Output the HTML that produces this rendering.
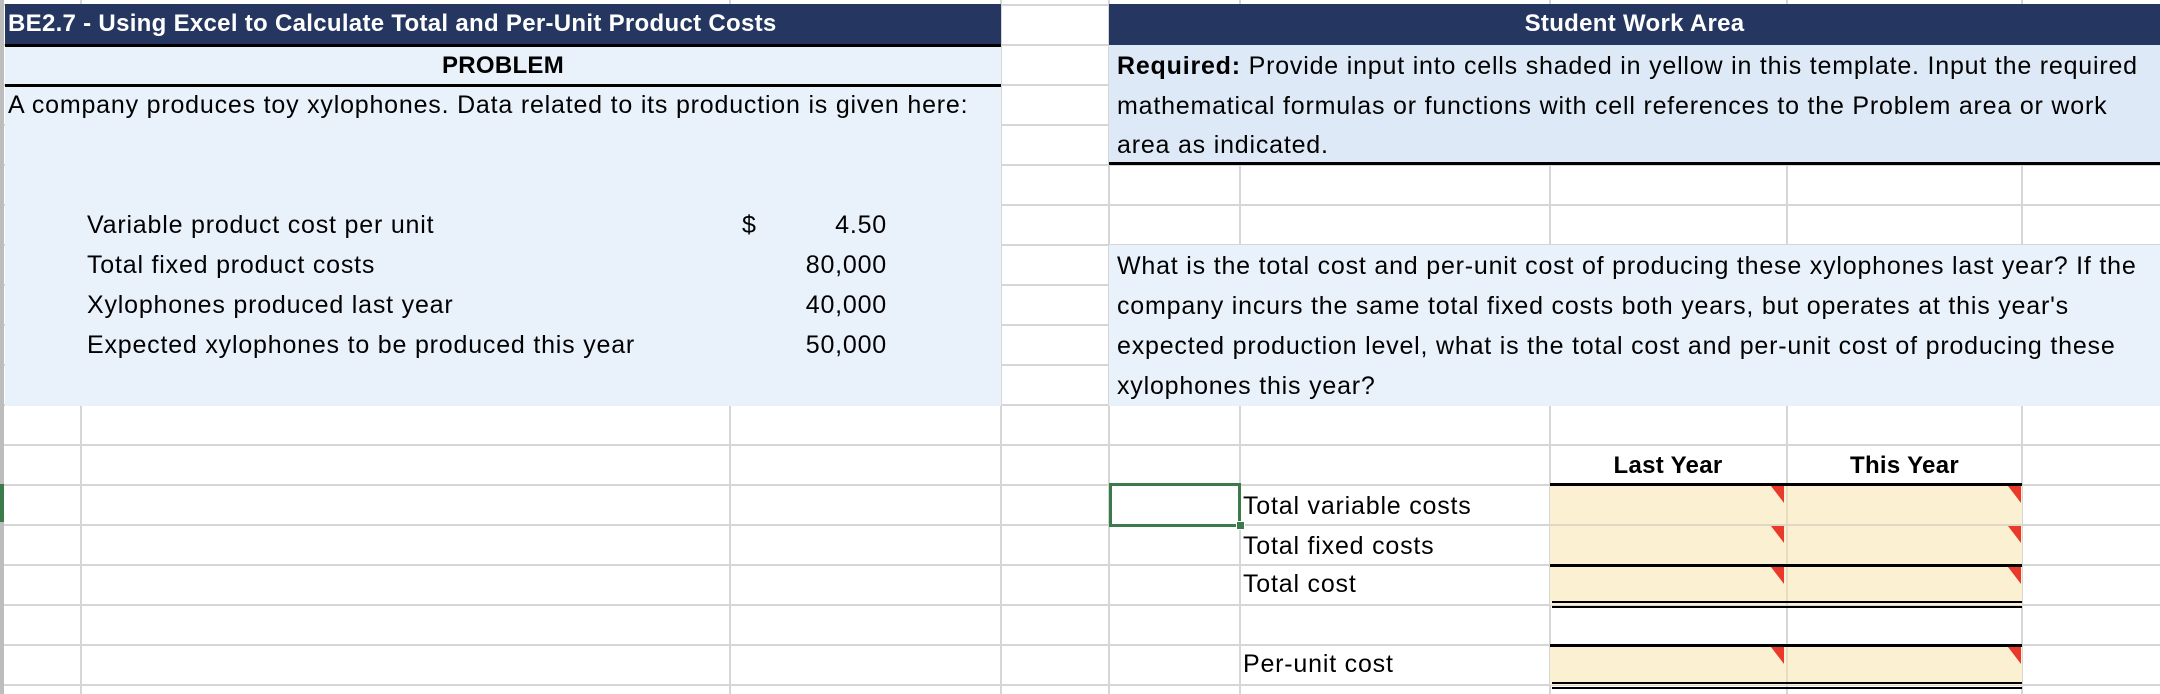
<!DOCTYPE html>
<html><head><meta charset="utf-8"><style>
*{margin:0;padding:0;box-sizing:border-box}
body{width:2160px;height:694px;overflow:hidden;background:#fff;position:relative;font-family:"Liberation Sans",Arial,sans-serif;font-size:25px;letter-spacing:0.8px;color:#000}
.h{position:absolute;left:0;width:2160px;height:2px;background:#d6d6d6}
.v{position:absolute;top:0;height:694px;width:2px;background:#d6d6d6}
.b{position:absolute}
.t{position:absolute;white-space:nowrap;line-height:40px;height:40px}
.hd{font-weight:bold;font-size:24px;letter-spacing:0.3px}
.bk{position:absolute;background:#000}
.tri{position:absolute;width:0;height:0;border-top:17px solid #e8392b;border-left:13px solid transparent}
</style></head><body>
<div class="h" style="top:4px"></div><div class="h" style="top:44px"></div><div class="h" style="top:84px"></div><div class="h" style="top:124px"></div><div class="h" style="top:164px"></div><div class="h" style="top:204px"></div><div class="h" style="top:244px"></div><div class="h" style="top:284px"></div><div class="h" style="top:324px"></div><div class="h" style="top:364px"></div><div class="h" style="top:404px"></div><div class="h" style="top:444px"></div><div class="h" style="top:484px"></div><div class="h" style="top:524px"></div><div class="h" style="top:564px"></div><div class="h" style="top:604px"></div><div class="h" style="top:644px"></div><div class="h" style="top:684px"></div>
<div class="v" style="left:80px"></div><div class="v" style="left:729px"></div><div class="v" style="left:1000px"></div><div class="v" style="left:1108px"></div><div class="v" style="left:1239px"></div><div class="v" style="left:1549px"></div><div class="v" style="left:1786px"></div><div class="v" style="left:2021px"></div>
<div class="b" style="left:0;top:0;width:4px;height:694px;background:#bdbdbd"></div>
<div class="b" style="left:0;top:484px;width:4px;height:38px;background:#3b7a4a"></div>

<div class="b" style="left:5px;top:45px;width:996px;height:361px;background:#e9f1fb"></div>
<div class="b" style="left:5px;top:4px;width:996px;height:41px;background:#253760"></div>
<div class="bk" style="left:5px;top:44px;width:996px;height:3px"></div>
<div class="bk" style="left:5px;top:84px;width:996px;height:3px"></div>
<div class="t hd" style="left:8px;top:4px;color:#fff">BE2.7 - Using Excel to Calculate Total and Per-Unit Product Costs</div>
<div class="t hd" style="left:5px;width:996px;top:46px;text-align:center">PROBLEM</div>
<div class="t" style="left:8px;top:85px">A company produces toy xylophones. Data related to its production is given here:</div>
<div class="t" style="left:87px;top:205px">Variable product cost per unit</div>
<div class="t" style="left:87px;top:245px">Total fixed product costs</div>
<div class="t" style="left:87px;top:285px">Xylophones produced last year</div>
<div class="t" style="left:87px;top:325px">Expected xylophones to be produced this year</div>
<div class="t" style="left:742px;top:205px">$</div>
<div class="t" style="left:740px;width:147px;text-align:right;top:205px">4.50</div>
<div class="t" style="left:740px;width:147px;text-align:right;top:245px">80,000</div>
<div class="t" style="left:740px;width:147px;text-align:right;top:285px">40,000</div>
<div class="t" style="left:740px;width:147px;text-align:right;top:325px">50,000</div>

<div class="b" style="left:1109px;top:4px;width:1051px;height:41px;background:#253760"></div>
<div class="t hd" style="left:1109px;width:1051px;top:4px;text-align:center;color:#fff">Student Work Area</div>
<div class="b" style="left:1109px;top:45px;width:1051px;height:119px;background:#dde9f6"></div>
<div class="bk" style="left:1109px;top:162px;width:1051px;height:3px"></div>
<div class="t" style="left:1117px;top:46px"><b>Required:</b> Provide input into cells shaded in yellow in this template. Input the required</div>
<div class="t" style="left:1117px;top:86px">mathematical formulas or functions with cell references to the Problem area or work</div>
<div class="t" style="left:1117px;top:125px">area as indicated.</div>
<div class="b" style="left:1109px;top:245px;width:1051px;height:161px;background:#e9f1fb"></div>
<div class="t" style="left:1117px;top:246px">What is the total cost and per-unit cost of producing these xylophones last year? If the</div>
<div class="t" style="left:1117px;top:286px">company incurs the same total fixed costs both years, but operates at this year's</div>
<div class="t" style="left:1117px;top:326px">expected production level, what is the total cost and per-unit cost of producing these</div>
<div class="t" style="left:1117px;top:366px">xylophones this year?</div>

<div class="t hd" style="left:1550px;width:236px;top:446px;text-align:center">Last Year</div>
<div class="t hd" style="left:1787px;width:235px;top:446px;text-align:center">This Year</div>
<div class="b" style="left:1550px;top:485px;width:472px;height:120px;background:#fcf0d2"></div>
<div class="b" style="left:1550px;top:645px;width:472px;height:40px;background:#fcf0d2"></div>
<div class="b" style="left:1786px;top:485px;width:2px;height:120px;background:#e6dcc0"></div>
<div class="b" style="left:1786px;top:645px;width:2px;height:40px;background:#e6dcc0"></div>
<div class="b" style="left:1550px;top:524px;width:472px;height:2px;background:#e0d8c2"></div>
<div class="bk" style="left:1550px;top:483px;width:472px;height:3px"></div>
<div class="bk" style="left:1550px;top:564px;width:472px;height:3px"></div>
<div class="bk" style="left:1552px;top:601px;width:470px;height:2px"></div>
<div class="bk" style="left:1552px;top:606px;width:470px;height:2px"></div>
<div class="bk" style="left:1550px;top:644px;width:472px;height:3px"></div>
<div class="bk" style="left:1552px;top:682px;width:470px;height:2px"></div>
<div class="bk" style="left:1552px;top:687px;width:470px;height:2px"></div>
<div class="tri" style="left:1771px;top:486px"></div><div class="tri" style="left:2008px;top:486px"></div>
<div class="tri" style="left:1771px;top:526px"></div><div class="tri" style="left:2008px;top:526px"></div>
<div class="tri" style="left:1771px;top:567px"></div><div class="tri" style="left:2008px;top:567px"></div>
<div class="tri" style="left:1771px;top:647px"></div><div class="tri" style="left:2008px;top:647px"></div>
<div class="t" style="left:1243px;top:486px">Total variable costs</div>
<div class="t" style="left:1243px;top:526px">Total fixed costs</div>
<div class="t" style="left:1243px;top:564px">Total cost</div>
<div class="t" style="left:1243px;top:644px">Per-unit cost</div>
<div class="b" style="left:1109px;top:483px;width:132px;height:44px;border:3px solid #3b7a4a"></div>
<div class="b" style="left:1236px;top:521px;width:9px;height:9px;background:#3b7a4a;border:1px solid #fff"></div>
</body></html>
